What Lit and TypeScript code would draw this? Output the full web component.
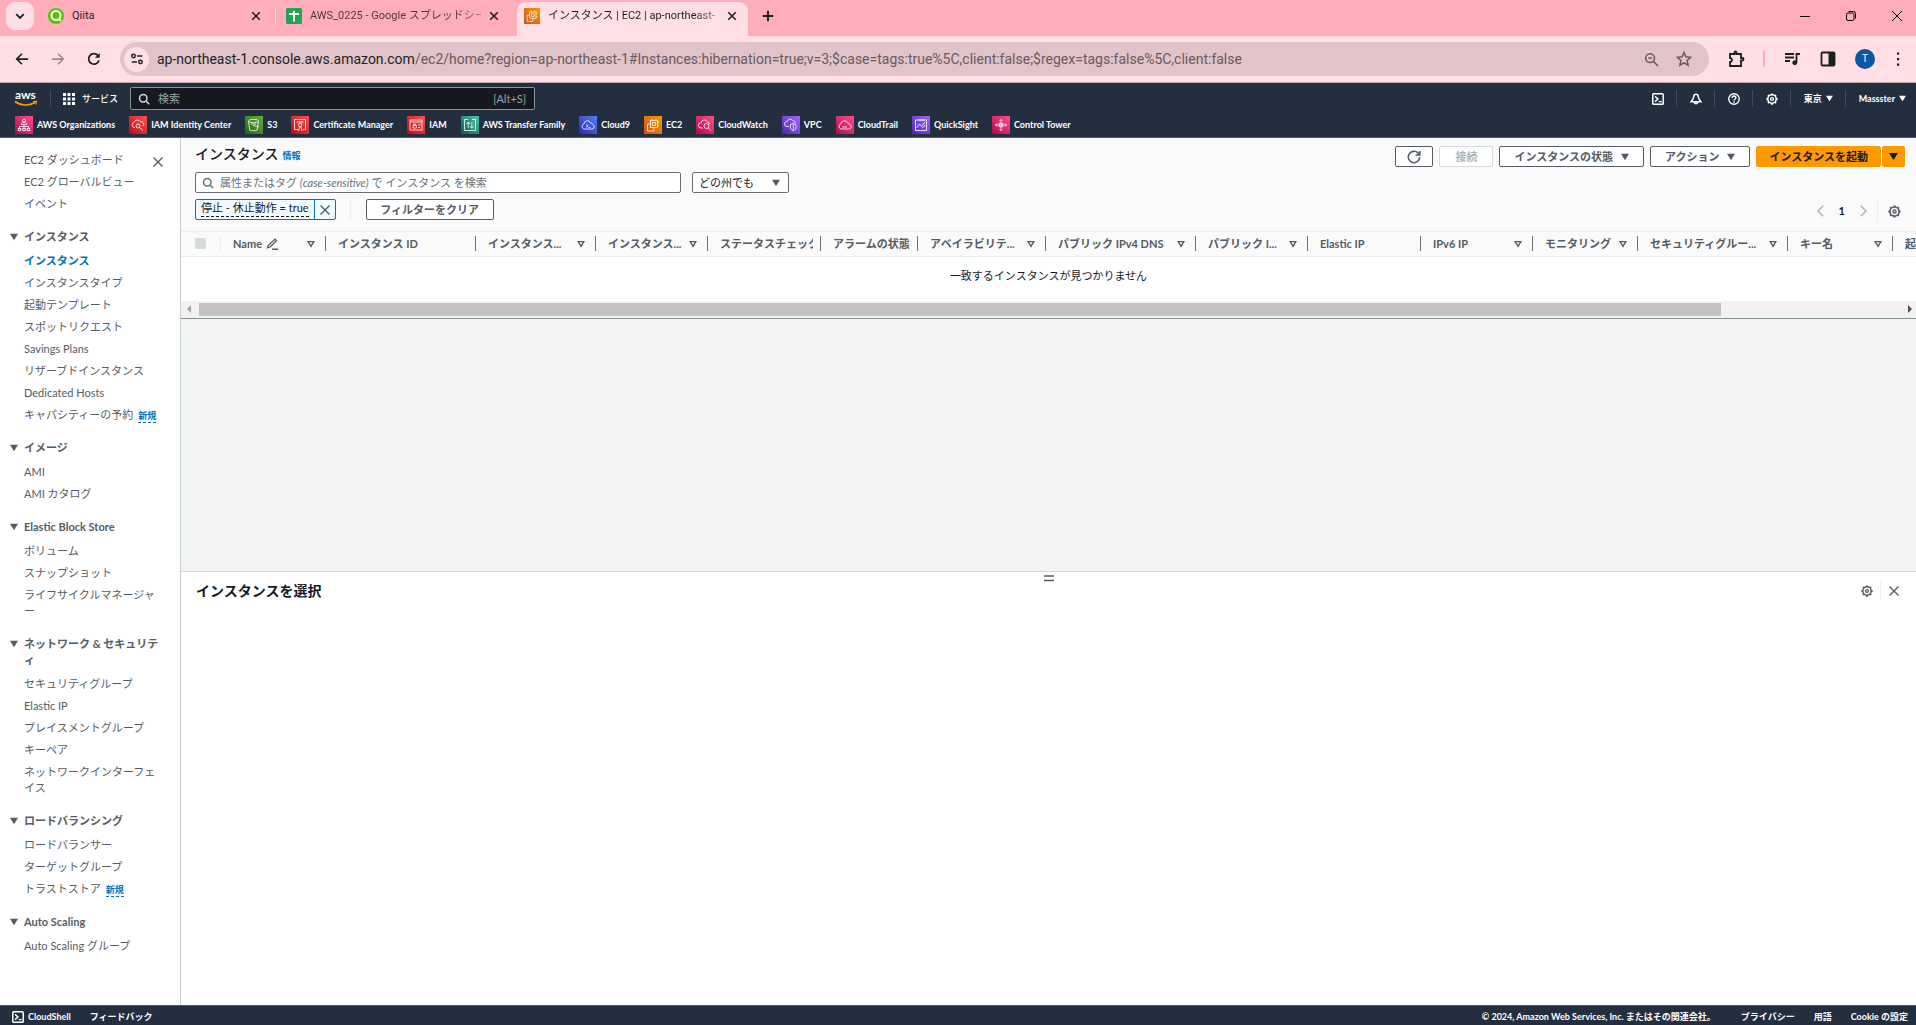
import { LitElement, html, css, svg, nothing, type TemplateResult } from "lit";
import { customElement } from "lit/decorators.js";
import { classMap } from "lit/directives/class-map.js";

const icon = (size: number, box: number, body: unknown, cls = "") =>
  html`<svg class=${cls} width=${size} height=${size} viewBox="0 0 ${box} ${box}" fill="none" stroke="currentColor" aria-hidden="true">${body}</svg>`;

const cross = (size = 12, w = 2) =>
  icon(size, 16, svg`<path d="M2 2l12 12M14 2L2 14" stroke-width=${w} />`);
const caret = (size = 9) =>
  icon(size, 10, svg`<path d="M0 1h10L5 9z" fill="currentColor" stroke="none" />`);
const magnifier = (size = 12) =>
  icon(size, 16, svg`<circle cx="7" cy="7" r="5" stroke-width="2"/><path d="M11 11l4 4" stroke-width="2" />`);
const gear = (size = 13) =>
  icon(size, 16, svg`<circle cx="8" cy="8" r="5.600" stroke-width="2"/><path d="M8 .5v2M8 13.500v2M.5 8h2M13.500 8h2M2.700 2.700l1.400 1.400M11.900 11.900l1.400 1.400M13.300 2.700l-1.400 1.400M4.100 11.900l-1.400 1.400" stroke-width="2.600"/><circle cx="8" cy="8" r="1.900" stroke-width="1.700"/>`);
const terminal = (size = 12) =>
  icon(size, 16, svg`<rect x="1" y="1" width="14" height="14" rx="1.500" stroke-width="2"/><path d="M4 4.500L8 8l-4 3.500M9 11.500h4" stroke-width="1.800"/>`);

const cloud = "M5 13h8a2.300 2.300 0 0 0 .6-4.500A2 2 0 0 0 11.400 7 3.300 3.300 0 0 0 5 7.800 2.700 2.700 0 0 0 5 13z";
const glyphs: Record<string, TemplateResult> = {
  org: svg`<circle cx="9" cy="4.700" r="1.500"/><path d="M6.300 8.500c0-3 5.400-3 5.400 0zM9 8.500v4M4.500 12.500v-2h9v2"/><rect x="3.300" y="12.500" width="2.500" height="2.200"/><rect x="7.800" y="12.500" width="2.500" height="2.200"/><rect x="12.200" y="12.500" width="2.500" height="2.200"/>` as never,
  idc: svg`<path d="M6 11.500H5A2.600 2.600 0 0 1 5 6.500 3.500 3.500 0 0 1 11.500 6a2.400 2.400 0 0 1 2.500 4"/><circle cx="9" cy="10" r="2"/><path d="M10.500 11.500l3.500 3"/>` as never,
  s3: svg`<ellipse cx="8.500" cy="5" rx="5" ry="1.700"/><path d="M3.500 5l1.200 9c1.500 1 6 1 7.500 0l1.300-9M8 9.500l6 1.500M6 8h5"/>` as never,
  cert: svg`<path d="M7 13.500H3.500v-10h11v10H12M5.500 6h7"/><circle cx="9.200" cy="9" r="1.700"/><path d="M7.500 15l1-4h1.500l1 4"/>` as never,
  iam: svg`<rect x="3" y="4" width="12" height="10"/><path d="M3 6h12M6 11v-1.500h3.500V12H6zM6.700 9.500V8h2v1.500M11 9h2.500M11 11.500h2"/>` as never,
  transfer: svg`<path d="M7 3.500H3.500v11h11v-11H11M7.200 12V6M5.500 8l1.700-2 1.800 2M10.800 6v6M9 10.300l1.800 2 1.700-2"/>` as never,
  cloud9: svg`<path d=${cloud}/><path d="M7 8.500l2 1.500-2 1.300M9.500 11.500h2"/>` as never,
  ec2: svg`<rect x="6.500" y="4.500" width="7" height="7"/><path d="M6.500 8H3.500v7H10v-3.500M8.500 6.500h3v3h-3zM8 3v1.500M12 3v1.500M15 6h-1.500M15 10h-1.500"/>` as never,
  watch: svg`<path d="M7 12H5A2.600 2.600 0 0 1 5 6.800 3.400 3.400 0 0 1 11.500 6a2.300 2.300 0 0 1 2.300 2"/><circle cx="10.500" cy="10" r="2.500"/><path d="M12.300 12l2.500 2.500"/>` as never,
  vpc: svg`<path d="M7 10.500H5A2.500 2.500 0 0 1 5 5.500 3.400 3.400 0 0 1 11.300 5 2.300 2.300 0 0 1 13.500 7"/><path d="M8.500 8.500L11.300 7.500 14 8.500v3.500c0 1.500-1.500 2.200-2.700 2.800-1.300-.6-2.800-1.300-2.800-2.800zM11.300 8v6"/>` as never,
  trail: svg`<path d=${cloud}/><path d="M6 11h5"/>` as never,
  quick: svg`<rect x="3.500" y="4" width="11" height="10.500"/><path d="M4.500 12l3-4 2 2.500L13 6M6 4l7 0M10.500 12l2.500-3"/>` as never,
  tower: svg`<path d="M9 3.500v11M3.500 9h11M7.500 5L9 3.500 10.500 5M7.500 13L9 14.500l1.500-1.500M5 7.500L3.500 9 5 10.500M13 7.500L14.500 9 13 10.500M7.200 7.200h3.600v3.600H7.200z"/>` as never,
};

const favourites = [
  ["AWS Organizations", "org", "magenta"],
  ["IAM Identity Center", "idc", "red"],
  ["S3", "s3", "green"],
  ["Certificate Manager", "cert", "red"],
  ["IAM", "iam", "red"],
  ["AWS Transfer Family", "transfer", "teal"],
  ["Cloud9", "cloud9", "blue"],
  ["EC2", "ec2", "orange"],
  ["CloudWatch", "watch", "magenta"],
  ["VPC", "vpc", "purple"],
  ["CloudTrail", "trail", "magenta"],
  ["QuickSight", "quick", "purple"],
  ["Control Tower", "tower", "magenta"],
];

const shared = css`
  * { box-sizing: border-box; }
  button, input, select { font: inherit; color: inherit; margin: 0; padding: 0; border: 0; background: none; outline: 0; }
  button { display: flex; align-items: center; justify-content: center; white-space: nowrap; }
  a { color: inherit; text-decoration: none; }
  svg { display: block; flex: none; }
  ul { list-style: none; margin: 0; padding: 0; }
  h1, h2, h3 { margin: 0; font-size: inherit; }
`;

const tiles = css`
  .tile { display: block; width: 18px; height: 18px; color: #fff; flex: none; }
  .tile.small { width: 16px; height: 16px; }
  .tile svg { width: 100%; height: 100%; stroke-width: 0.8; }
  .magenta { background: linear-gradient(45deg, #b0084d, #ff4f8b); }
  .red { background: linear-gradient(45deg, #bd0816, #ff5252); }
  .green { background: linear-gradient(45deg, #1b660f, #6cae3e); }
  .teal { background: linear-gradient(45deg, #055f4e, #56c0a7); }
  .blue { background: linear-gradient(45deg, #2e27ad, #527fff); }
  .orange { background: linear-gradient(45deg, #c8511b, #ff9900); }
  .purple { background: linear-gradient(45deg, #4d27a8, #a166ff); }
`;

const tile = (glyph: string, colour: string, small = false) =>
  html`<span class=${classMap({ tile: true, small, [colour]: true })}>${icon(18, 18, glyphs[glyph])}</span>`;

@customElement("browser-chrome")
class BrowserChrome extends LitElement {
  static styles = [shared, tiles, css`
    :host { display: block; font: 11px/16px "Roboto", "Noto Sans CJK JP", sans-serif; color: #1f1f1f; }
    .strip { display: flex; height: 36px; background: #ffadbb; padding: 2px 13px 0 6px; }
    .search { width: 28px; height: 28px; border-radius: 9px; background: #ffdfe5; }
    .tab { display: flex; align-items: center; height: 28px; gap: 8px; }
    .tab.qiita { width: 227px; margin-left: 14px; padding-right: 14px; }
    .divider { width: 1px; height: 16px; margin-top: 6px; background: #f3d9de; }
    .tab.sheet { width: 230px; padding: 0 7px 0 10px; }
    .tab.live { width: 231px; height: 34px; padding: 0 11px 6px 7px; margin-left: 11px; background: #ffdfe5; border-radius: 9px 9px 0 0; }
    .label { flex: 1; text-align: left; justify-content: flex-start; overflow: hidden; min-width: 0; }
    .fade { mask-image: linear-gradient(90deg, #000 85%, #0006); }
    .label.dim { color: #54383d; }
    .new { width: 40px; height: 28px; }
    .window { display: flex; margin-left: auto; gap: 34px; height: 28px; color: #000; }
    .bar { display: flex; align-items: center; height: 47px; background: #ffdfe5; border-bottom: 1px solid #c9a9af; padding: 0 13px 0 15px; }
    .nav { display: flex; gap: 22px; width: 105px; }
    .nav .off { color: #a8868c; }
    .address { flex: 1; display: flex; align-items: center; height: 34px; border-radius: 17px; background: #e0c4c9; padding: 0 17px 0 4px; color: #6b595d; }
    .site { width: 25px; height: 25px; border-radius: 13px; background: #ffdfe5; color: #1f1f1f; }
    .field { flex: 1; display: grid; align-items: center; margin-left: 8px; font-size: 14px; line-height: 20px; }
    .field > * { grid-area: 1 / 1; }
    .field span { pointer-events: none; white-space: nowrap; }
    .field b { font-weight: 400; color: #1f1f1f; }
    .marks { display: flex; gap: 17px; }
    .tools { display: flex; align-items: center; gap: 18px; padding-left: 18px; }
    .tools button:last-child { width: 10px; }
    .rule { width: 2px; height: 16px; background: #ffadbb; }
    .me { width: 20px; height: 20px; border-radius: 10px; background: #0b57a0; color: #fff; font-size: 10px; }
  `];
  render() {
    return html`
      <div class="strip">
        <button class="search" aria-label="タブを検索">${icon(10, 16, svg`<path d="M2 5l6 6 6-6" stroke-width="3"/>`)}</button>
        <div class="tab qiita">
          ${icon(16, 16, svg`<circle cx="8" cy="8" r="8" fill="#55c500" stroke="none"/><circle cx="8" cy="7.500" r="4.500" stroke="#fff" stroke-width="2"/><path d="M11 11l2 2" stroke="#fff" stroke-width="2"/>`)}
          <button class="label">Qiita</button>
          <button aria-label="閉じる">${cross(10, 2.5)}</button>
        </div>
        <span class="divider"></span>
        <div class="tab sheet">
          ${icon(16, 16, svg`<rect width="16" height="16" rx="1.500" fill="#23a455" stroke="none"/><path d="M3 6h10M8 3v10.500" stroke="#fff" stroke-width="2"/>`)}
          <button class="label dim fade">AWS_0225 - Google スプレッドシー</button>
          <button aria-label="閉じる">${cross(10, 2.5)}</button>
        </div>
        <div class="tab live">
          ${tile("ec2", "orange", true)}
          <button class="label fade">インスタンス | EC2 | ap-northeast-</button>
          <button aria-label="閉じる">${cross(10, 2.5)}</button>
        </div>
        <button class="new" aria-label="新しいタブ">${icon(12, 16, svg`<path d="M8 1v14M1 8h14" stroke-width="2.500"/>`)}</button>
        <div class="window">
          <button aria-label="最小化">${icon(12, 12, svg`<path d="M1 6.500h10"/>`)}</button>
          <button aria-label="元に戻す">${icon(12, 12, svg`<rect x="1.500" y="3" width="7.500" height="7.500" rx="1.500"/><path d="M3.500 1.500h5a2 2 0 0 1 2 2v5"/>`)}</button>
          <button aria-label="閉じる">${icon(12, 12, svg`<path d="M1 1l10 10M11 1L1 11"/>`)}</button>
        </div>
      </div>
      <div class="bar">
        <div class="nav">
          <button aria-label="戻る">${icon(14, 16, svg`<path d="M15 8H2M8 2L2 8l6 6" stroke-width="2"/>`)}</button>
          <button class="off" aria-label="進む">${icon(14, 16, svg`<path d="M1 8h13M8 2l6 6-6 6" stroke-width="2"/>`)}</button>
          <button aria-label="再読み込み">${icon(14, 16, svg`<path d="M13.700 9.500A6 6 0 1 1 12.500 4l1 1.200" stroke-width="2"/><path d="M14.500 1v5.500H9z" fill="currentColor" stroke="none"/>`)}</button>
        </div>
        <div class="address">
          <button class="site" aria-label="サイト情報">${icon(14, 16, svg`<circle cx="4" cy="4.500" r="2" stroke-width="1.700"/><path d="M8 4.500h6M2 11.500h6" stroke-width="1.700"/><circle cx="12" cy="11.500" r="2" stroke-width="1.700"/>`)}</button>
          <div class="field"><input aria-label="アドレス" /><span><b>ap-northeast-1.console.aws.amazon.com</b>/ec2/home?region=ap-northeast-1#Instances:hibernation=true;v=3;$case=tags:true%5C,client:false;$regex=tags:false%5C,client:false</span></div>
          <div class="marks">
            <button aria-label="ズーム">${icon(15, 16, svg`<circle cx="6.500" cy="6.500" r="4.700" stroke-width="1.600"/><path d="M10 10l5 5M4.500 6.500h4" stroke-width="1.600"/>`)}</button>
            <button aria-label="ブックマーク">${icon(16, 16, svg`<path d="M8 1.500l1.900 4.300 4.700.5-3.500 3.200 1 4.700L8 11.800l-4.100 2.400 1-4.700L1.400 6.300l4.700-.5z" stroke-width="1.500"/>`)}</button>
          </div>
        </div>
        <div class="tools">
          <button aria-label="拡張機能">${icon(18, 18, svg`<path d="M3 4h4.500V2.500a1 1 0 0 1 2 0V4H14v4h1.300a1 1 0 0 1 0 2.500H14V16H3v-4a2 2 0 0 0 0-4z" stroke-width="1.800"/>`)}</button>
          <span class="rule"></span>
          <button aria-label="メディア">${icon(18, 18, svg`<path d="M2 4h9M2 7.500h9M2 11h5M13.500 12.500V4H17" stroke-width="1.800"/><circle cx="11.800" cy="12.700" r="2" fill="currentColor"/>`)}</button>
          <button aria-label="サイドパネル">${icon(18, 18, svg`<rect x="2.500" y="2.500" width="13" height="13" rx="1" stroke-width="1.800"/><path d="M10 2.500h5v13h-5z" fill="currentColor"/>`)}</button>
          <button class="me">T</button>
          <button aria-label="メニュー">${icon(16, 16, svg`<path d="M7 1.500h2.200v2.200H7zM7 7h2.200v2.200H7zM7 12.500h2.200v2.200H7z" fill="currentColor" stroke="none"/>`)}</button>
        </div>
      </div>`;
  }
}

@customElement("console-header")
class ConsoleHeader extends LitElement {
  static styles = [shared, tiles, css`
    :host { display: block; background: #232f3e; color: #fff; font: 700 9px/14px "Lato", "Noto Sans CJK JP", sans-serif; border-bottom: 1px solid #545b64; }
    .top { display: flex; align-items: center; height: 31px; padding: 0 9px 0 14px; }
    .logo { padding-right: 12px; border-right: 1px solid #414d5c; height: 17px; }
    .logo svg { overflow: visible; }
    .services { gap: 7px; padding: 0 12px 0 12px; font-weight: 500; }
    .find { display: flex; align-items: center; gap: 8px; width: 405px; height: 23px; padding: 0 8px 0 7px; background: #16191f; border: 1px solid #879596; border-radius: 2px; font: 400 11px/16px "Lato", "Noto Sans CJK JP", sans-serif; color: #95a5a6; }
    .find input { flex: 1; min-width: 0; }
    .find input::placeholder { color: #95a5a6; opacity: 1; }
    .find svg { color: #d5dbdb; }
    .right { display: flex; align-items: center; margin-left: auto; }
    .right button { height: 17px; padding: 0 12px 0 13px; gap: 4px; border-right: 1px solid #414d5c; }
    .right button:last-child { border: 0; padding-right: 1px; }
    .favs { display: flex; gap: 14px; padding: 2px 15px 3px; }
    .favs a { display: flex; align-items: center; gap: 4px; white-space: nowrap; }
  `];
  render() {
    return html`
      <header>
        <div class="top">
          <a class="logo" href="#" aria-label="AWS">
            <svg width="24" height="17" viewBox="0 0 24 17"><text x="1" y="9" font-family="Lato, sans-serif" font-size="12" font-weight="700" fill="#fff">aws</text><path d="M1 11.500c6 4.500 14 4.500 20 1" fill="none" stroke="#ff9900" stroke-width="1.600"/><path d="M19 11.500l3.500-.2-.8 3.200" fill="none" stroke="#ff9900" stroke-width="1.200"/></svg>
          </a>
          <button class="services">${icon(12, 12, svg`<path d="M0 0h3v3H0zM4.500 0h3v3h-3zM9 0h3v3H9zM0 4.500h3v3H0zM4.500 4.500h3v3h-3zM9 4.500h3v3H9zM0 9h3v3H0zM4.500 9h3v3h-3zM9 9h3v3H9z" fill="currentColor" stroke="none"/>`)}サービス</button>
          <label class="find">${magnifier(12)}<input placeholder="検索" aria-label="検索" /><span>[Alt+S]</span></label>
          <div class="right">
            <button aria-label="CloudShell">${terminal(12)}</button>
            <button aria-label="通知">${icon(12, 16, svg`<path d="M8 1.500c-2.500 0-3.200 2-3.200 4S3 9.500 1.500 11.500h13C13 9.500 11.200 7.500 11.200 5.500s-.7-4-3.200-4zM6 12.500c0 2.500 4 2.500 4 0" stroke-width="2"/>`)}</button>
            <button aria-label="ヘルプ">${icon(12, 16, svg`<circle cx="8" cy="8" r="7" stroke-width="1.800"/><path d="M5.500 6.500c0-3.300 5-3.300 5 0C10.500 8 8 8 8 10M8 11v2" stroke-width="1.800"/>`)}</button>
            <button aria-label="設定">${gear(12)}</button>
            <button>東京 ${caret(7)}</button>
            <button>Massster ${caret(7)}</button>
          </div>
        </div>
        <nav class="favs">${favourites.map(([n, g, c]) => html`<a href="#">${tile(g, c)}${n}</a>`)}</nav>
      </header>`;
  }
}

type Item = string | { text: string; fresh?: boolean; active?: boolean };
const top: Item[] = ["EC2 ダッシュボード", "EC2 グローバルビュー", "イベント"];
const groups: { title: string; items: Item[] }[] = [
  { title: "インスタンス", items: [{ text: "インスタンス", active: true }, "インスタンスタイプ", "起動テンプレート", "スポットリクエスト", "Savings Plans", "リザーブドインスタンス", "Dedicated Hosts", { text: "キャパシティーの予約", fresh: true }] },
  { title: "イメージ", items: ["AMI", "AMI カタログ"] },
  { title: "Elastic Block Store", items: ["ボリューム", "スナップショット", "ライフサイクルマネージャー"] },
  { title: "ネットワーク & セキュリティ", items: ["セキュリティグループ", "Elastic IP", "プレイスメントグループ", "キーペア", "ネットワークインターフェイス"] },
  { title: "ロードバランシング", items: ["ロードバランサー", "ターゲットグループ", { text: "トラストストア", fresh: true }] },
  { title: "Auto Scaling", items: ["Auto Scaling グループ"] },
];

@customElement("side-nav")
class SideNav extends LitElement {
  static styles = [shared, css`
    :host { display: block; background: #fff; color: #545b64; font: 11px/16px "Lato", "Noto Sans CJK JP", sans-serif; padding: 14px 16px 16px 10px; border-right: 1px solid #c4cccc; }
    .first { display: flex; justify-content: space-between; align-items: flex-start; }
    .first button { width: 12px; height: 20px; }
    ul { display: flex; flex-direction: column; gap: 6px; padding-left: 14px; line-break: anywhere; word-break: break-word; }
    section { margin-top: 17px; }
    h3 { display: flex; align-items: flex-start; margin-bottom: 8px; line-break: anywhere; }
    h3 button { width: 14px; height: 16px; justify-content: flex-start; flex: none; }
    .active { color: #0073bb; font-weight: 700; }
    .new { color: #0073bb; font-size: 9px; font-weight: 700; line-height: 12px; border-bottom: 1px dashed #0073bb; margin-left: 5px; display: inline-block; }
  `];
  item(i: Item) {
    const o = typeof i === "string" ? { text: i } : i;
    return html`<li><a href="#" class=${classMap({ active: !!o.active })}>${o.text}</a>${o.fresh ? html`<a class="new" href="#">新規</a>` : nothing}</li>`;
  }
  render() {
    return html`<nav>
      <div class="first"><ul>${top.map((i) => this.item(i))}</ul><button aria-label="ナビゲーションを閉じる">${cross(12, 1.8)}</button></div>
      ${groups.map((g) => html`<section><h3><button aria-label="折りたたむ">${caret(8)}</button><span>${g.title}</span></h3><ul>${g.items.map((i) => this.item(i))}</ul></section>`)}
    </nav>`;
  }
}

const columns: [string, number, boolean][] = [
  ["Name", 105, true], ["インスタンス ID", 150, false], ["インスタンス...", 120, true], ["インスタンス...", 112, true],
  ["ステータスチェック", 113, false], ["アラームの状態", 97, false], ["アベイラビリテ...", 128, true], ["パブリック IPv4 DNS", 150, true],
  ["パブリック I...", 112, true], ["Elastic IP", 113, false], ["IPv6 IP", 112, true], ["モニタリング", 105, true],
  ["セキュリティグルー...", 150, true], ["キー名", 105, true], ["起動時刻", 140, true],
];

@customElement("instance-list")
class InstanceList extends LitElement {
  static styles = [shared, css`
    :host { display: block; background: #fafafa; color: #545b64; font: 11px/16px "Lato", "Noto Sans CJK JP", sans-serif; border-bottom: 1px solid #879596; }
    .head { padding: 8px 11px 8px 14px; }
    .row { display: flex; align-items: center; }
    .row.title { justify-content: space-between; align-items: flex-start; height: 26px; }
    h1 { font-size: 14px; line-height: 16px; font-weight: 500; color: #16191f; }
    .info { color: #0073bb; font-size: 9px; font-weight: 700; margin-left: 4px; }
    .actions { display: flex; gap: 6px; }
    .btn { height: 21px; padding: 0 14px; border: 1px solid #545b64; border-radius: 2px; background: #fff; font-weight: 700; gap: 8px; }
    .btn.icon { padding: 0 11px; }
    .btn.off { padding: 0 15px; color: #aab7b8; border-color: #d5dbdb; }
    .split { display: flex; gap: 1px; }
    .btn.hot { background: #ff9900; border-color: #ff9900; color: #16191f; padding: 0 12px; }
    .btn.hot.drop { padding: 0 6px; }
    .box { display: flex; align-items: center; width: 486px; height: 21px; padding: 0 6px; gap: 6px; background: #fff; border: 1px solid #687078; border-radius: 2px; color: #687078; }
    .cell { flex: 1; display: grid; }
    .cell > * { grid-area: 1 / 1; }
    .hint { pointer-events: none; }
    .pick { display: grid; align-items: center; width: 97px; margin-left: 11px; color: #16191f; background: #fff; border: 1px solid #687078; border-radius: 2px; height: 21px; }
    .pick > * { grid-area: 1 / 1; }
    .pick select { appearance: none; width: 100%; padding: 0 6px; }
    .pick svg { justify-self: end; margin-right: 8px; color: #545b64; pointer-events: none; }
    .row.filters { margin-top: 6px; justify-content: space-between; align-items: flex-start; }
    .token { display: flex; height: 21px; border: 1px solid #0073bb; border-radius: 2px; background: #f1faff; color: #16191f; margin-right: 14px; }
    .token span { margin: 0 5px; line-height: 15px; height: 17px; border-bottom: 1px dashed #16191f; }
    .token button { width: 21px; border-left: 1px solid #0073bb; color: #545b64; }
    .clear { margin-left: 15px; width: 128px; }
    .line { width: 1px; height: 21px; background: #eaeded; }
    .pages { display: flex; align-items: center; gap: 12px; height: 24px; color: #545b64; padding-right: 4px; }
    .pages .step { color: #aab7b8; }
    .pages .line { margin-left: -4px; margin-right: -2px; }
    .page { color: #16191f; font-weight: 700; }
    .scroll { overflow: hidden; border-top: 1px solid #eaeded; }
    table { table-layout: fixed; width: 100%; border-collapse: collapse; }
    th { height: 24px; padding: 0; text-align: left; font-weight: 700; border-bottom: 1px solid #eaeded; }
    .th { display: flex; align-items: center; height: 15px; padding: 0 10px 0 12px; border-right: 1px solid #687078; gap: 4px; }
    .th.plain { padding-right: 7px; }
    .th .name { flex: 1; min-width: 0; overflow: hidden; white-space: nowrap; line-height: 16px; display: flex; align-items: center; gap: 4px; }
    .th.check { padding-left: 14px; border-color: #eaeded; }
    .check input { appearance: none; width: 11px; height: 11px; background: #d5dbdb; border-radius: 1px; }
    .empty { background: #fff; height: 44px; padding-top: 11px; text-align: center; color: #16191f; margin: 0; }
    .bar { display: flex; align-items: center; background: #f1f1f1; height: 17px; padding: 0 2px 0 4px; gap: 6px; color: #a3a3a3; }
    .bar .end { color: #505050; }
    .track { flex: 1; display: flex; }
    .thumb { flex: 17; height: 13px; background: #c1c1c1; }
    .rest { flex: 2; }
  `];
  render() {
    return html`
      <div class="head">
        <div class="row title">
          <h1>インスタンス<a class="info" href="#">情報</a></h1>
          <div class="actions">
            <button class="btn icon" aria-label="更新">${icon(14, 16, svg`<path d="M14.500 8A6.500 6.500 0 1 1 12.500 3.300L14.500 5.500M14.700 1v4.800H9.900" stroke-width="1.800"/>`)}</button>
            <button class="btn off" disabled>接続</button>
            <button class="btn">インスタンスの状態${caret(8)}</button>
            <button class="btn">アクション${caret(8)}</button>
            <div class="split"><button class="btn hot">インスタンスを起動</button><button class="btn hot drop" aria-label="その他">${caret(9)}</button></div>
          </div>
        </div>
        <div class="row">
          <label class="box">${magnifier(12)}<span class="cell"><input aria-label="インスタンスを検索" /><span class="hint">属性またはタグ <i>(case-sensitive)</i> で インスタンス を検索</span></span></label>
          <label class="pick"><select aria-label="州"><option>どの州でも</option></select>${caret(8)}</label>
        </div>
        <div class="row filters">
          <div class="row">
            <div class="token"><span>停止 - 休止動作 = true</span><button aria-label="削除">${cross(12, 1.8)}</button></div>
            <span class="line"></span>
            <button class="btn clear">フィルターをクリア</button>
          </div>
          <div class="pages">
            <button class="step" aria-label="前へ">${icon(12, 16, svg`<path d="M11 1L4 8l7 7" stroke-width="2"/>`)}</button>
            <span class="page">1</span>
            <button class="step" aria-label="次へ">${icon(12, 16, svg`<path d="M5 1l7 7-7 7" stroke-width="2"/>`)}</button>
            <span class="line"></span>
            <button aria-label="設定">${gear(13)}</button>
          </div>
        </div>
      </div>
      <div class="scroll">
        <table>
          <colgroup><col style="width:40px" />${columns.map(([, w]) => html`<col style="width:${w}px" />`)}</colgroup>
          <thead><tr>
            <th><div class="th check"><input type="checkbox" aria-label="すべて選択" disabled /></div></th>
            ${columns.map(([t, , sort]) => html`<th scope="col"><div class=${classMap({ th: true, plain: !sort })}>
              <span class="name">${t}${t === "Name" ? icon(12, 16, svg`<path d="M3 10L12 1.500l2 2L5.500 12 2 13zM8 15h8" stroke-width="1.700"/>`) : nothing}</span>
              ${sort ? icon(8, 10, svg`<path d="M1.500 2h7L5 8z" stroke-width="1.700"/>`) : nothing}
            </div></th>`)}
          </tr></thead>
        </table>
        <p class="empty">一致するインスタンスが見つかりません</p>
      </div>
      <div class="bar">
        ${icon(8, 8, svg`<path d="M6 0v8L2 4z" fill="currentColor" stroke="none"/>`)}
        <div class="track"><div class="thumb"></div><div class="rest"></div></div>
        ${icon(8, 8, svg`<path d="M2 0v8l4-4z" fill="currentColor" stroke="none"/>`, "end")}
      </div>`;
  }
}

@customElement("detail-panel")
class DetailPanel extends LitElement {
  static styles = [shared, css`
    :host { display: block; background: #fff; border-top: 1px solid #d5dbdb; color: #545b64; font: 14px/18px "Lato", "Noto Sans CJK JP", sans-serif; }
    .grip { width: 100%; height: 12px; }
    .row { display: flex; justify-content: space-between; align-items: center; height: 14px; padding: 0 16px 0 15px; }
    h2 { color: #16191f; font-weight: 700; font-size: 14px; }
    .tools { display: flex; align-items: center; gap: 7px; }
    .line { width: 1px; height: 18px; background: #eaeded; }
  `];
  render() {
    return html`
      <button class="grip" aria-label="サイズ変更">${icon(10, 10, svg`<path d="M0 3h10M0 7.500h10" stroke-width="1.500"/>`)}</button>
      <div class="row">
        <h2>インスタンスを選択</h2>
        <div class="tools"><button aria-label="設定">${gear(12)}</button><span class="line"></span><button aria-label="閉じる">${cross(12, 1.8)}</button></div>
      </div>`;
  }
}

@customElement("app-root")
class AppRoot extends LitElement {
  static styles = [shared, css`
    :host { display: flex; flex-direction: column; min-height: 100vh; background: #f2f3f3; }
    .body { flex: 1; display: grid; grid-template-columns: 181px minmax(0, 1fr); }
    main { display: grid; grid-template: 433fr 434fr / minmax(0, 1fr); }
    footer { display: flex; align-items: center; height: 20px; gap: 19px; padding: 2px 8px 0 12px; background: #232f3e; border-top: 1px solid #545b64; color: #fff; font: 700 9px/14px "Lato", "Noto Sans CJK JP", sans-serif; white-space: nowrap; }
    .shell { display: flex; align-items: center; gap: 4px; }
    .legal { margin-left: auto; margin-right: 6px; }
  `];
  render() {
    return html`
      <browser-chrome></browser-chrome>
      <console-header></console-header>
      <div class="body">
        <side-nav></side-nav>
        <main>
          <div><instance-list></instance-list></div>
          <detail-panel></detail-panel>
        </main>
      </div>
      <footer>
        <a class="shell" href="#">${terminal(12)}CloudShell</a>
        <a href="#">フィードバック</a>
        <span class="legal">© 2024, Amazon Web Services, Inc. またはその関連会社。</span>
        <a href="#">プライバシー</a>
        <a href="#">用語</a>
        <a href="#">Cookie の設定</a>
      </footer>`;
  }
}
